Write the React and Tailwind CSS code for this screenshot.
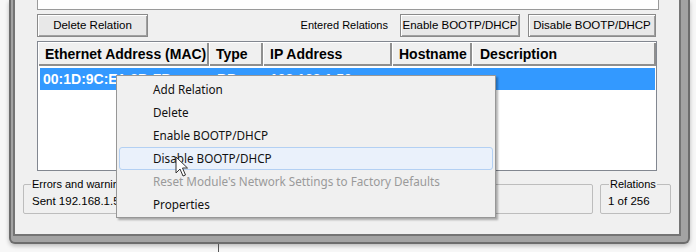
const ui = "font-['Liberation_Sans',Arial,sans-serif]";

function Button({ children, className }) {
  return (
    <div
      className={`h-[23px] flex items-center justify-center bg-[#e8e8e8] border border-[#8a8a8a] shadow-[inset_1px_1px_0_#ffffff,inset_-1px_-1px_0_#a0a0a0] text-[11.5px] text-black ${className}`}
    >
      {children}
    </div>
  );
}

function HeaderCell({ children, className }) {
  return (
    <div
      className={`h-[24px] flex items-center pl-[7px] bg-[#f0f0f0] shadow-[inset_1px_1px_0_#ffffff,inset_-2px_-2px_0_#8f8f8f] font-bold text-[14px] text-black whitespace-nowrap overflow-hidden ${className}`}
    >
      {children}
    </div>
  );
}

const menuItems = [
  { label: 'Add Relation' },
  { label: 'Delete' },
  { label: 'Enable BOOTP/DHCP' },
  { label: 'Disable BOOTP/DHCP', hover: true },
  { label: "Reset Module's Network Settings to Factory Defaults", disabled: true },
  { label: 'Properties' },
];

export default function App() {
  return (
    <div className={`relative w-[696px] h-[252px] overflow-hidden bg-[#f7f7f7] ${ui}`}>
      {/* window */}
      <div className="ml-[9px] w-[681px] h-[244px] flex bg-[#a3a3a3] border-2 border-t-0 border-[#6c6c6c] rounded-b-[6px] pl-[2px] pr-[7px] pb-[6px] shadow-[0_2px_4px_rgba(0,0,0,0.25)]">
        <div className="flex-1 flex flex-col bg-[#f0f0f0] border-2 border-t-0 border-[#747474]">
          {/* top list */}
          <div className="ml-[22px] w-[622px] h-[10px] bg-white border-x border-b border-[#9a9a9a]" />

          {/* buttons row */}
          <div className="ml-[22px] mt-[4px] w-[619px] flex items-center">
            <Button className="w-[111px]">Delete Relation</Button>
            <span className="ml-auto text-[11px] text-black">Entered Relations</span>
            <Button className="ml-[12px] w-[120px]">Enable BOOTP/DHCP</Button>
            <Button className="ml-[8px] w-[128px]">Disable BOOTP/DHCP</Button>
          </div>

          {/* list view */}
          <div className="ml-[22px] mt-[4px] w-[620px] h-[130px] bg-white border border-[#828790] flex flex-col">
            <div className="flex">
              <HeaderCell className="w-[171px]">Ethernet Address (MAC)</HeaderCell>
              <HeaderCell className="w-[54px]">Type</HeaderCell>
              <HeaderCell className="w-[129px]">IP Address</HeaderCell>
              <HeaderCell className="w-[80px]">Hostname</HeaderCell>
              <HeaderCell className="w-[184px] pl-[8px]">Description</HeaderCell>
            </div>
            <div className="mt-[2px] ml-[2px] mr-[1px] h-[22px] flex items-center bg-[#3399ff] text-white font-bold text-[14px] whitespace-nowrap">
              <div className="w-[169px] pl-[3px]">00:1D:9C:E1:8B:FB</div>
              <div className="w-[54px] pl-[8px]">BP</div>
              <div className="w-[129px] pl-[7px]">192.168.1.50</div>
              <div className="w-[80px] pl-[7px]"></div>
              <div className="flex-1"></div>
            </div>
          </div>

          {/* group boxes */}
          <div className="mt-[7px] mx-[8px] flex gap-[7px]">
            <fieldset className="w-[570px] h-[36px] border border-[#bdbdbd] rounded-[2px] px-[8px]">
              <legend className="px-[1px] ml-[-1px] text-[11px] text-black leading-[13px]">Errors and warnings</legend>
              <div className="text-[11.5px] text-black mt-[2px]">Sent 192.168.1.50</div>
            </fieldset>
            <fieldset className="w-[71px] h-[36px] border border-[#bdbdbd] rounded-[2px] px-[7px]">
              <legend className="px-[1px] ml-[1px] text-[11px] text-black leading-[13px]">Relations</legend>
              <div className="text-[11.5px] text-black mt-[2px]">1 of 256</div>
            </fieldset>
          </div>
        </div>
      </div>
      <div className="ml-[218px] w-px h-[8px] bg-[#555555]" />

      {/* context menu */}
      <div className="absolute left-[116px] top-[75px] w-[380px] bg-[#f0f0f0] border border-[#979797] px-[2px] pt-[2px] pb-[1px] shadow-[2px_2px_2px_rgba(0,0,0,0.3)] font-['Noto_Sans',sans-serif] text-[11.7px]">
        {menuItems.map((it) => (
          <div
            key={it.label}
            className={`h-[23px] flex items-center pl-[33px] rounded-[3px] border ${
              it.hover ? 'bg-[#eaf1fb] border-[#b3d0f3]' : 'border-transparent'
            } ${it.disabled ? 'text-[#9a9a9a]' : 'text-[#111111]'}`}
          >
            {it.label}
          </div>
        ))}
      </div>

      {/* mouse cursor */}
      <svg className="absolute left-[175px] top-[156px]" width="14" height="22" viewBox="0 0 14 22">
        <path d="M1 1 L1 17 L5 13 L8 20 L10.5 19 L7.5 12 L12.5 12 Z" fill="#ffffff" stroke="#333333" strokeWidth="1" strokeLinejoin="round" />
      </svg>
    </div>
  );
}
